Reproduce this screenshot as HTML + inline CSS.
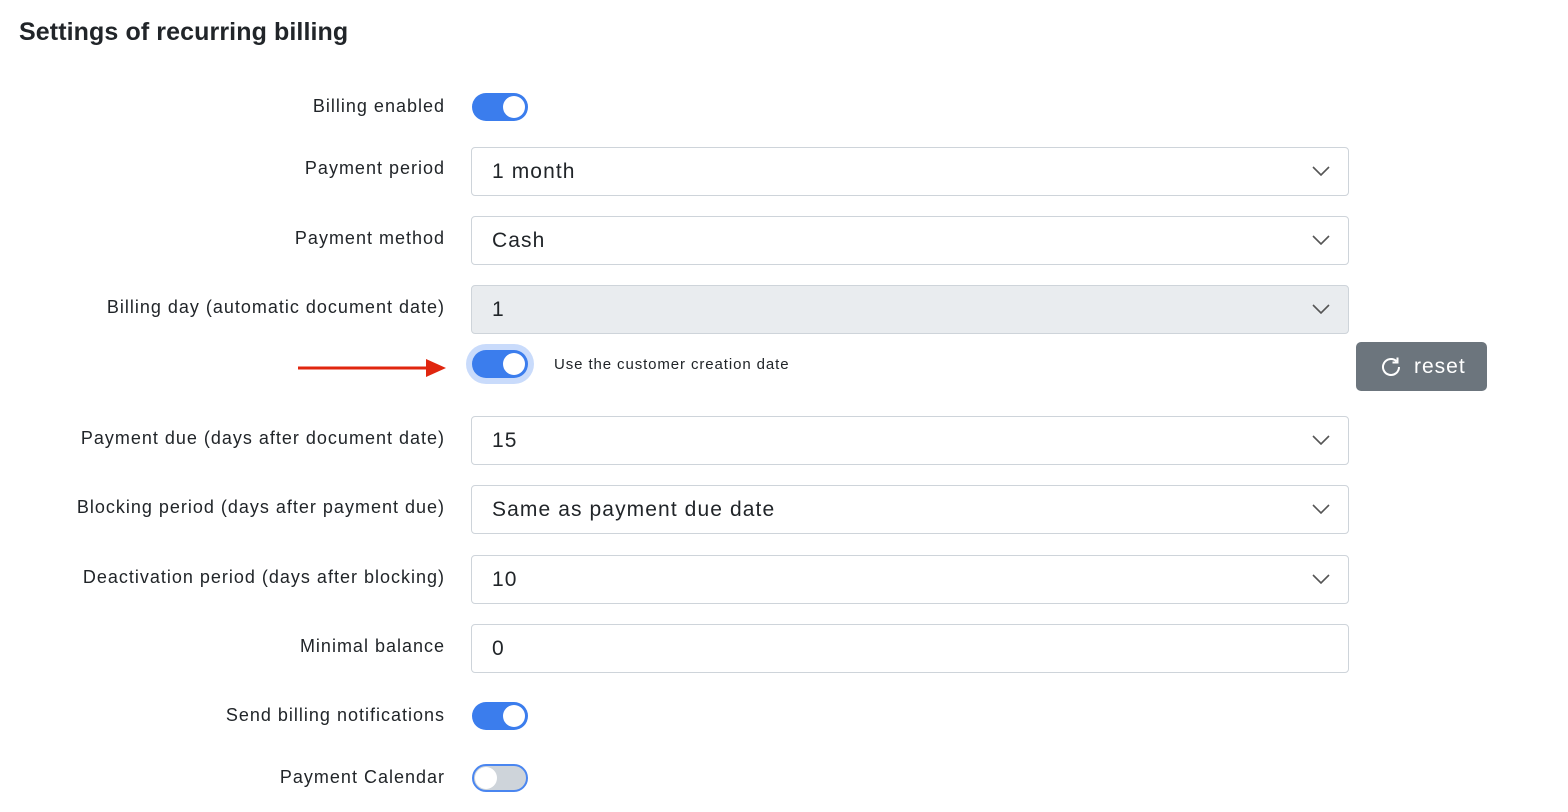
<!DOCTYPE html>
<html><head><style>
body{margin:0;width:1568px;height:812px;background:#fff;font-family:"Liberation Sans",sans-serif;color:#212529;position:relative;overflow:hidden}
.a{position:absolute}
h1{position:absolute;left:19px;top:18px;margin:0;font-size:25px;font-weight:bold;color:#212529;letter-spacing:0.1px}
.lbl{position:absolute;right:1123px;font-size:18px;color:#212529;white-space:nowrap;letter-spacing:1px}
.sel{position:absolute;left:471px;width:878px;height:49px;border:1px solid #ced4da;border-radius:4px;box-sizing:border-box;font-size:21px;line-height:48px;padding-left:20px;background:#fff;letter-spacing:1.1px}
.sel.dis{background:#e9ecef}
.sel svg{position:absolute;right:18px;top:18px}
.tg{position:absolute;left:472px;width:56px;height:28px;border-radius:14px;background:#3b7ded;box-sizing:border-box}
.tg::after{content:"";position:absolute;right:3px;top:3px;width:22px;height:22px;border-radius:50%;background:#fff}
.tg.off{background:#ced4da;border:2px solid #4a86f0}
.tg.off::after{left:1px;right:auto;top:1px}
</style></head><body>
<h1>Settings of recurring billing</h1>

<div class="lbl" style="top:96px">Billing enabled</div>
<div class="tg" style="top:93px"></div>

<div class="lbl" style="top:158px">Payment period</div>
<div class="sel" style="top:147px">1 month<svg width="18" height="10"><path d="M1 1l8 8 8-8" fill="none" stroke="#555" stroke-width="1.6"/></svg></div>

<div class="lbl" style="top:228px">Payment method</div>
<div class="sel" style="top:216px">Cash<svg width="18" height="10"><path d="M1 1l8 8 8-8" fill="none" stroke="#555" stroke-width="1.6"/></svg></div>

<div class="lbl" style="top:297px">Billing day (automatic document date)</div>
<div class="sel dis" style="top:285px">1<svg width="18" height="10"><path d="M1 1l8 8 8-8" fill="none" stroke="#555" stroke-width="1.6"/></svg></div>

<svg class="a" style="left:298px;top:357px" width="150" height="22"><path d="M0 11H130" stroke="#e0260f" stroke-width="3"/><path d="M128 2L148 11 128 20z" fill="#e0260f"/></svg>
<div class="a" style="left:466px;top:344px;width:68px;height:40px;border-radius:20px;background:#c9dbfb"></div>
<div class="tg" style="top:350px"></div>
<div class="a" style="left:554px;top:356px;font-size:15px;letter-spacing:0.9px">Use the customer creation date</div>
<div class="a" style="left:1356px;top:342px;width:131px;height:49px;border-radius:5px;background:#6c757d;color:#fff;font-size:21px;line-height:50px;letter-spacing:1px">
<svg class="a" style="left:23px;top:13px" width="24" height="24" viewBox="0 0 24 24"><path d="M20 12a8 8 0 1 1-2.5-5.8" fill="none" stroke="#fff" stroke-width="2"/><path d="M18.5 2.5v5h-5" fill="none" stroke="#fff" stroke-width="2"/></svg>
<span class="a" style="left:58px">reset</span></div>

<div class="lbl" style="top:428px">Payment due (days after document date)</div>
<div class="sel" style="top:416px">15<svg width="18" height="10"><path d="M1 1l8 8 8-8" fill="none" stroke="#555" stroke-width="1.6"/></svg></div>

<div class="lbl" style="top:497px">Blocking period (days after payment due)</div>
<div class="sel" style="top:485px">Same as payment due date<svg width="18" height="10"><path d="M1 1l8 8 8-8" fill="none" stroke="#555" stroke-width="1.6"/></svg></div>

<div class="lbl" style="top:567px">Deactivation period (days after blocking)</div>
<div class="sel" style="top:555px">10<svg width="18" height="10"><path d="M1 1l8 8 8-8" fill="none" stroke="#555" stroke-width="1.6"/></svg></div>

<div class="lbl" style="top:636px">Minimal balance</div>
<div class="sel" style="top:624px">0</div>

<div class="lbl" style="top:705px">Send billing notifications</div>
<div class="tg" style="top:702px"></div>

<div class="lbl" style="top:767px">Payment Calendar</div>
<div class="tg off" style="top:764px"></div>
</body></html>
